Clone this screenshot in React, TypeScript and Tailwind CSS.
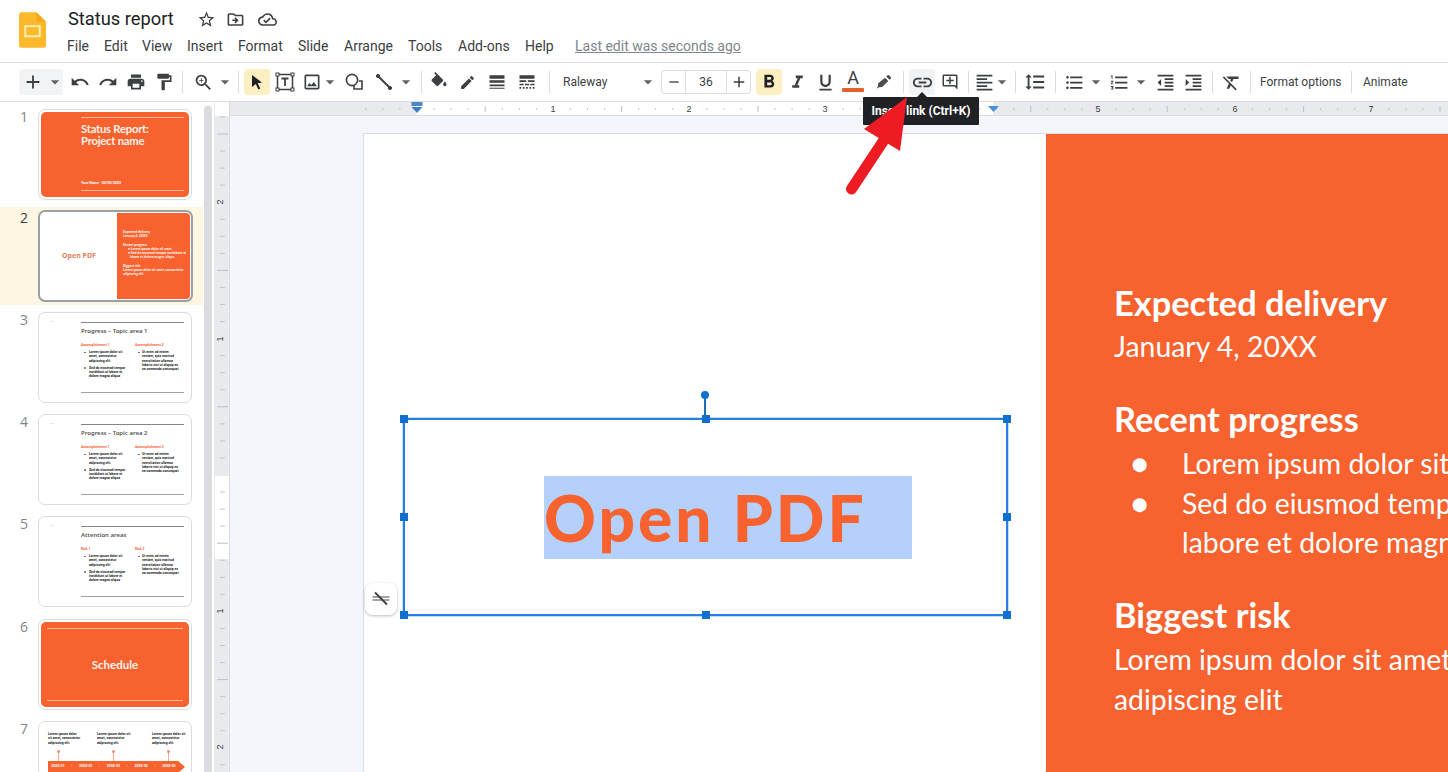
import React from "react";
import {
  MdAdd, MdArrowDropDown, MdUndo, MdRedo, MdPrint, MdFormatPaint, MdOutlineZoomIn, MdOutlineImage,
  MdEdit, MdLineWeight, MdLineStyle, MdRemove, MdFormatItalic, MdFormatUnderlined,
  MdFormatBold, MdLink, MdOutlineAddComment, MdFormatAlignLeft, MdFormatLineSpacing,
  MdFormatListBulleted, MdFormatListNumbered, MdFormatIndentDecrease, MdFormatIndentIncrease, MdFormatClear,
  MdStarBorder, MdOutlineDriveFileMove, MdOutlineCloudDone,
} from "react-icons/md";

const ic = "#3c4043";

function Sep({ className }: { className: string }) {
  return (
    <div className={`flex justify-center shrink-0 ${className}`}>
      <div className="w-px h-[22px] bg-[#dadce0]" />
    </div>
  );
}

function Btn({ className, children }: { className: string; children: React.ReactNode }) {
  return <div className={`flex items-center justify-center h-[26px] shrink-0 rounded ${className}`}>{children}</div>;
}

function Caret({ className = "w-[14px]" }: { className?: string }) {
  return (
    <Btn className={className}>
      <MdArrowDropDown size={20} color="#5f6368" className="shrink-0" />
    </Btn>
  );
}

function SlidesLogo() {
  return (
    <svg width="27" height="36" viewBox="0 0 28 37" className="shrink-0">
      <path d="M3 0h15l10 10v24a3 3 0 0 1-3 3H3a3 3 0 0 1-3-3V3a3 3 0 0 1 3-3z" fill="#fbb92b" />
      <path d="M18 0l10 10h-7a3 3 0 0 1-3-3z" fill="#f6a81c" />
      <rect x="6.5" y="14.5" width="15" height="10.5" fill="none" stroke="#fdeeb8" strokeWidth="2" />
    </svg>
  );
}

function Header() {
  const menus = [
    ["File", "w-[37px]"], ["Edit", "w-[38px]"], ["View", "w-[45px]"], ["Insert", "w-[51px]"], ["Format", "w-[60px]"],
    ["Slide", "w-[46px]"], ["Arrange", "w-[64px]"], ["Tools", "w-[50px]"], ["Add-ons", "w-[67px]"], ["Help", "w-[50px]"],
  ];
  return (
    <div className="h-[63px] shrink-0 flex border-b border-[#dadce0] pl-[19px]">
      <div className="pt-[12px] w-[48px] shrink-0"><SlidesLogo /></div>
      <div className="flex flex-col">
        <div className="flex items-center h-[22px] mt-[8px]">
          <span className="text-[18.3px] leading-[22px] text-[#202124] w-[130px] pl-px">Status report</span>
          <MdStarBorder size={19} color={ic} />
          <MdOutlineDriveFileMove size={19} color={ic} className="ml-[10px]" />
          <MdOutlineCloudDone size={19} color={ic} className="ml-[13px]" />
        </div>
        <div className="flex items-center h-[18px] mt-[7px] text-[14px] text-[#3c4043]">
          {menus.map(([m, w]) => (
            <span key={m} className={w}>{m}</span>
          ))}
          <span className="text-[#80868b] underline">Last edit was seconds ago</span>
        </div>
      </div>
    </div>
  );
}

function CursorIcon() {
  return (
    <svg width="18" height="18" viewBox="0 0 18 18">
      <path d="M4 2l10 7.6-4.3.6 2.6 5.3-2 .9-2.5-5.3L4 14z" fill="#202124" />
    </svg>
  );
}

function TextBoxIcon() {
  return (
    <svg width="20" height="20" viewBox="0 0 20 20" fill="none" stroke={ic} strokeWidth="1.5">
      <rect x="2.5" y="2.5" width="15" height="15" />
      <rect x="1" y="1" width="3" height="3" fill="#fff" strokeWidth="1" />
      <rect x="16" y="1" width="3" height="3" fill="#fff" strokeWidth="1" />
      <rect x="1" y="16" width="3" height="3" fill="#fff" strokeWidth="1" />
      <rect x="16" y="16" width="3" height="3" fill="#fff" strokeWidth="1" />
      <path d="M6.5 6.5h7M10 6.5v7.5" strokeWidth="1.8" />
    </svg>
  );
}

function ShapeIcon() {
  return (
    <svg width="20" height="20" viewBox="0 0 20 20" fill="none" stroke={ic} strokeWidth="1.6">
      <circle cx="8" cy="8" r="5.6" />
      <path d="M10 13.8V17h8V9h-3.2" />
    </svg>
  );
}

function LineIcon() {
  return (
    <svg width="18" height="18" viewBox="0 0 18 18" fill="none" stroke={ic}>
      <path d="M3 3l12 12" strokeWidth="2" />
      <circle cx="3" cy="3" r="1.6" fill={ic} />
      <circle cx="15" cy="15" r="1.6" fill={ic} />
    </svg>
  );
}

function FillIcon() {
  return (
    <svg width="20" height="20" viewBox="0 0 24 24">
      <path fill={ic} d="M16.56 8.94L7.62 0 6.21 1.41l2.38 2.38-5.15 5.15c-.59.59-.59 1.54 0 2.12l5.5 5.5c.29.29.68.44 1.06.44s.77-.15 1.06-.44l5.5-5.5c.59-.58.59-1.53 0-2.12zM19 11.5s-2 2.17-2 3.5c0 1.1.9 2 2 2s2-.9 2-2c0-1.33-2-3.5-2-3.5z" />
    </svg>
  );
}

function MarkerIcon() {
  return (
    <svg width="18" height="18" viewBox="0 0 24 24">
      <path fill="#4a4d51" d="M13.5 6.2l4.3 4.3-8.3 8.3-4.3.2-2.2 1.5-.5-.5 1.5-2.2.2-4.3z" />
      <path fill="#4a4d51" d="M15 4.7l1.8-1.8c.5-.5 1.3-.5 1.8 0l2.5 2.5c.5.5.5 1.3 0 1.8L19.3 9z" />
    </svg>
  );
}

function Toolbar() {
  const s = 20;
  return (
    <div className="h-[39px] shrink-0 flex items-center pl-[19px] border-b border-[#dadce0]">
      <div className="flex items-center h-[26px] w-[44px] shrink-0 bg-[#f1f3f4] rounded">
        <Btn className="w-[28px]"><MdAdd size={22} color={ic} /></Btn>
        <Caret className="w-[16px]" />
      </div>
      <Btn className="w-[28px] ml-[3px]"><MdUndo size={s} color={ic} /></Btn>
      <Btn className="w-[28px]"><MdRedo size={s} color={ic} /></Btn>
      <Btn className="w-[28px]"><MdPrint size={s} color={ic} /></Btn>
      <Btn className="w-[28px]"><MdFormatPaint size={s} color={ic} /></Btn>
      <Sep className="w-[9px]" />
      <Btn className="w-[30px] ml-px"><MdOutlineZoomIn size={21} color={ic} /></Btn>
      <Caret className="w-[14px]" />
      <Sep className="w-[12px]" />
      <Btn className="w-[26px] bg-[#feefc3]"><CursorIcon /></Btn>
      <Btn className="w-[30px]"><TextBoxIcon /></Btn>
      <Btn className="w-[24px]"><MdOutlineImage size={s} color={ic} /></Btn>
      <Caret className="w-[12px]" />
      <Btn className="w-[28px] ml-[4px]"><ShapeIcon /></Btn>
      <Btn className="w-[28px] ml-[2px]"><LineIcon /></Btn>
      <Caret className="w-[16px]" />
      <Sep className="w-[14px]" />
      <Btn className="w-[21px]"><FillIcon /></Btn>
      <Btn className="w-[30px] ml-[3px]"><MdEdit size={17} color={ic} /></Btn>
      <Btn className="w-[30px]"><MdLineWeight size={s} color={ic} /></Btn>
      <Btn className="w-[30px]"><MdLineStyle size={s} color={ic} /></Btn>
      <Sep className="w-[14px]" />
      <div className="w-[106px] shrink-0 flex items-center justify-between text-[12px] text-[#3c4043] pl-[7px]">
        <span>Raleway</span>
        <span className="pr-[4px]"><MdArrowDropDown size={20} color="#5f6368" className="block" /></span>
      </div>
      <div className="flex items-center w-[90px] h-[24px] border border-[#dadce0] rounded shrink-0 ml-[-1px]">
        <div className="w-[24px] h-full flex items-center justify-center border-r border-[#dadce0]"><MdRemove size={16} color={ic} /></div>
        <div className="flex-1 text-center text-[12px] text-[#3c4043]">36</div>
        <div className="w-[24px] h-full flex items-center justify-center border-l border-[#dadce0]"><MdAdd size={18} color={ic} /></div>
      </div>
      <Btn className="w-[26px] ml-[5px] bg-[#feefc3]"><MdFormatBold size={22} color="#202124" /></Btn>
      <Btn className="w-[30px]"><MdFormatItalic size={21} color={ic} /></Btn>
      <Btn className="w-[26px]"><MdFormatUnderlined size={21} color={ic} /></Btn>
      <Btn className="w-[30px] flex-col relative">
        <span className="text-[18px] leading-[20px] text-[#3c4043] -mt-[4px]">A</span>
        <span className="block w-[22px] h-[4px] bg-[#e0622f] rounded-[1px]" />
      </Btn>
      <Btn className="w-[32px]"><MarkerIcon /></Btn>
      <Sep className="w-[6px]" />
      <Btn className="w-[26px] bg-[#f1f3f4] ml-[3px]"><MdLink size={23} color={ic} /></Btn>
      <Btn className="w-[30px]"><MdOutlineAddComment size={18} color={ic} /></Btn>
      <Sep className="w-[6px]" />
      <Btn className="w-[26px]"><MdFormatAlignLeft size={21} color={ic} /></Btn>
      <Caret className="w-[10px]" />
      <Sep className="w-[16px]" />
      <Btn className="w-[24px]"><MdFormatLineSpacing size={22} color={ic} /></Btn>
      <Sep className="w-[16px]" />
      <Btn className="w-[22px]"><MdFormatListBulleted size={21} color={ic} /></Btn>
      <Caret className="w-[22px]" />
      <Btn className="w-[24px]"><MdFormatListNumbered size={21} color={ic} /></Btn>
      <Caret className="w-[20px]" />
      <Btn className="w-[28px]"><MdFormatIndentDecrease size={21} color={ic} /></Btn>
      <Btn className="w-[28px]"><MdFormatIndentIncrease size={21} color={ic} /></Btn>
      <Sep className="w-[10px]" />
      <Btn className="w-[28px]"><MdFormatClear size={21} color={ic} /></Btn>
      <Sep className="w-[10px]" />
      <span className="text-[12px] text-[#3c4043] whitespace-nowrap w-[96px] pl-[5px]">Format options</span>
      <Sep className="w-px" />
      <span className="text-[12px] text-[#3c4043] whitespace-nowrap pl-[11px]">Animate</span>
    </div>
  );
}

function OrangeThumb() {
  return (
    <div className="w-full h-full bg-[#f7622f] rounded-[5px] flex flex-col pt-[5px] pb-[6px] pl-[40px] pr-[5px]">
      <div className="h-px bg-[#fdb79e]" />
      <div className="text-[11.2px] leading-[12px] font-bold text-[#fff3ec] mt-[5px] tracking-[-0.2px] font-['Lato']">Status Report:<br />Project name</div>
      <div className="flex-1" />
      <div className="text-[3.6px] font-bold text-white">Your Name · 00/00/20XX</div>
      <div className="h-px bg-[#fdb79e] mt-[4px]" />
    </div>
  );
}

const tiny = "text-[3.4px] leading-[4.3px] text-[#202124] font-bold";

function Bullet({ children, className }: { children: React.ReactNode; className: string }) {
  return (
    <div className={`${tiny} relative ${className}`}>
      <span className="absolute left-[3px] top-[1.5px] w-[1.5px] h-[1.5px] rounded-full bg-[#5f6368]" />
      {children}
    </div>
  );
}

function ContentThumb({ title, h1, h2 }: { title: string; h1: string; h2: string }) {
  return (
    <div className="w-full h-full bg-white flex rounded-[5px] px-[2px]">
      <div className="w-[38px] shrink-0 pl-[8px] pt-[4px] text-[4px] text-gray-500 leading-[6px]">–</div>
      <div className="flex-1 pr-[3px] pt-[7px] flex flex-col">
        <div className="h-[1px] bg-[#80868b]" />
        <div className="text-[6px] leading-[8px] font-semibold text-[#555555] mt-[4px] whitespace-nowrap font-['Noto_Sans']">{title}</div>
        <div className="flex mt-[8px] flex-1">
          <div className="w-[54px] shrink-0">
            <div className="text-[3.4px] leading-[5px] font-bold text-[#f7622f]">{h1}</div>
            <Bullet className="mt-[2px] pl-[8px] pr-[8px]">Lorem ipsum dolor sit amet, consectetur adipiscing elit</Bullet>
            <Bullet className="mt-[3px] pl-[8px] pr-[8px]">Sed do eiusmod tempor incididunt ut labore et dolore magna aliqua</Bullet>
          </div>
          <div className="flex-1">
            <div className="text-[3.4px] leading-[5px] font-bold text-[#f7622f]">{h2}</div>
            <Bullet className="mt-[2px] pl-[7px] pr-[4px]">Ut enim ad minim veniam, quis nostrud exercitation ullamco laboris nisi ut aliquip ex ea commodo consequat</Bullet>
          </div>
        </div>
        <div className="h-[1px] bg-[#a0a4a8] mb-[7px]" />
      </div>
    </div>
  );
}

function Card({ children, selected }: { children: React.ReactNode; selected?: boolean }) {
  return (
    <div
      className={
        selected
          ? "w-[155px] h-[92px] rounded-[7px] border-[2px] border-[#9aa0a6] bg-white shrink-0 overflow-hidden"
          : "w-[154px] h-[91px] rounded-[7px] border-[1px] border-[#dadce0] bg-white p-[2px] shrink-0 overflow-hidden"
      }
    >
      {children}
    </div>
  );
}

function Row({ n, children, selected, className }: { n: number; children: React.ReactNode; selected?: boolean; className: string }) {
  return (
    <div className={`flex w-[203px] pl-[38px] relative shrink-0 ${className}`}>
      <span className={`absolute left-[20px] top-0 text-[14px] font-['Open_Sans'] leading-[16px] ${selected ? "text-[#3c4043]" : "text-[#80868b]"}`}>{n}</span>
      {children}
    </div>
  );
}

function SlidePanel() {
  return (
    <div className="w-[215px] shrink-0 flex bg-white overflow-hidden border-r border-[#e8eaed]">
      <div className="w-[203px] shrink-0 flex flex-col pt-[7px]">
        <Row n={1} className="h-[98px]"><Card><OrangeThumb /></Card></Row>
        <div className="bg-[#fdf6e3] h-[98px] pt-[3px] shrink-0">
          <Row n={2} selected className="h-[92px]">
            <Card selected>
              <div className="w-full h-full flex">
                <div className="w-[77px] flex items-center justify-center text-[7px] font-bold text-[#e2805c] font-['Noto_Sans'] pl-[1px]">Open PDF</div>
                <div className="flex-1 bg-[#f7622f] rounded-r-[4px] my-[1px] mr-[1px] pl-[6px] pt-[17px] text-white font-bold text-[3.4px] leading-[4.3px] font-['Lato'] overflow-hidden whitespace-nowrap">
                  <div>Expected delivery<br />January 4, 20XX</div>
                  <div className="mt-[4px]">Recent progress</div>
                  <div className="pl-[5px]">• Lorem ipsum dolor sit amet<br />• Sed do eiusmod tempor incididunt ut<br />&nbsp;&nbsp;labore et dolore magna aliqua</div>
                  <div className="mt-[4px]">Biggest risk</div>
                  <div>Lorem ipsum dolor sit amet, consectetur<br />adipiscing elit</div>
                </div>
              </div>
            </Card>
          </Row>
        </div>
        <div className="h-[7px] shrink-0" />
        <Row n={3} className="h-[102px]"><Card><ContentThumb title="Progress – Topic area 1" h1="Accomplishment 1" h2="Accomplishment 2" /></Card></Row>
        <Row n={4} className="h-[102px]"><Card><ContentThumb title="Progress – Topic area 2" h1="Accomplishment 1" h2="Accomplishment 2" /></Card></Row>
        <Row n={5} className="h-[103px]"><Card><ContentThumb title="Attention areas" h1="Risk 1" h2="Risk 2" /></Card></Row>
        <Row n={6} className="h-[102px]">
          <Card>
            <div className="w-full h-full bg-[#f7622f] rounded-[5px] flex flex-col px-[6px] py-[6px]">
              <div className="h-px bg-[#fdb79e]" />
              <div className="flex-1 flex items-center justify-center text-[11.5px] font-bold text-[#fff3ec] font-['Lato']">Schedule</div>
              <div className="h-px bg-[#fdb79e]" />
            </div>
          </Card>
        </Row>
        <Row n={7} className="h-[60px]">
          <div className="w-[154px] h-[90px] rounded-[7px] border border-[#dadce0] bg-white shrink-0 overflow-hidden pl-[9px] pt-[10px]">
            <div className="flex">
              <div className={`${tiny} w-[49px] pr-[16px]`}>Lorem ipsum dolor sit amet, consectetur adipiscing elit</div>
              <div className={`${tiny} w-[55px] pr-[20px]`}>Lorem ipsum dolor sit amet, consectetur adipiscing elit</div>
              <div className={`${tiny} w-[36px]`}>Lorem ipsum dolor sit amet, consectetur adipiscing elit</div>
            </div>
            <div className="flex h-[16px] pl-[10px]">
              <div className="w-[55px] h-full flex flex-col"><span className="w-[3px] h-[3px] rounded-full bg-[#f28b82] -ml-px mt-[5px]" /><span className="w-px flex-1 bg-[#fca88d]" /></div>
              <div className="w-[55px] h-full flex flex-col"><span className="w-[3px] h-[3px] rounded-full bg-[#f28b82] -ml-px mt-[5px]" /><span className="w-px flex-1 bg-[#fca88d]" /></div>
              <div className="w-[10px] h-full flex flex-col"><span className="w-[3px] h-[3px] rounded-full bg-[#f28b82] -ml-px mt-[5px]" /><span className="w-px flex-1 bg-[#fca88d]" /></div>
            </div>
            <div className="h-[12px] w-[137px] bg-[#f7622f] flex items-center justify-around pr-[6px] text-[3.4px] font-bold text-white [clip-path:polygon(0_0,95%_0,100%_50%,95%_100%,0_100%)]">
              <span>20XX-01</span><span>›</span><span>20XX-02</span><span>›</span><span>20XX-03</span><span>›</span><span>20XX-04</span><span>›</span><span>20XX-05</span>
            </div>
          </div>
        </Row>
      </div>
      <div className="flex-1 relative pt-[4px] pl-px">
        <div className="w-[8px] h-[680px] bg-[#dadce0] rounded-t-[3px]" />
      </div>
    </div>
  );
}

function HRuler() {
  const labels: [number, string][] = [[553, "1"], [689, "2"], [825, "3"], [1098, "5"], [1235, "6"], [1371, "7"]];
  const ticks: number[] = [];
  for (let i = -3; i < 68; i++) ticks.push(i);
  return (
    <div className="h-[14px] shrink-0 bg-[#e8eaed] border-b border-[#dadce0] relative flex">
      <div className="w-[186px] shrink-0" />
      <div className="w-[577px] shrink-0 bg-white" />
      <svg className="absolute left-0 top-0" width="1232" height="14">
        {ticks.map((i) => {
          const x = 187 + i * 17.05;
          if (i % 8 === 0) return null;
          if (i % 4 === 0) return <line key={i} x1={x} x2={x} y1="4" y2="10" stroke="#bdc1c6" />;
          return <line key={i} x1={x} x2={x} y1="6" y2="8" stroke="#c4c7ca" />;
        })}
      </svg>
      {labels.map(([x, t]) => (
        <span key={t} className="absolute top-0 text-[9px] leading-[14px] text-[#3c4043] font-['Liberation_Sans'] -translate-x-1/2" style={{ left: x - 230 }}>
          {t}
        </span>
      ))}
      <svg className="absolute left-[180px] top-0" width="14" height="13" viewBox="0 0 14 13">
        <rect x="1.5" y="0" width="11" height="4" fill="#4a86c8" />
        <path d="M1.5 5h11L7 11z" fill="#3b7fc4" />
      </svg>
      <svg className="absolute left-[757px] top-[3px]" width="13" height="9" viewBox="0 0 13 9">
        <path d="M1 1h11L6.5 7z" fill="#4a90d9" />
      </svg>
    </div>
  );
}

function VRuler() {
  const ticks: number[] = [];
  for (let i = -23; i < 18; i++) ticks.push(i);
  return (
    <div className="w-[15px] shrink-0 bg-[#e8eaed] border-r border-[#dadce0] relative flex flex-col">
      <div className="h-[14px] shrink-0 bg-white" />
      <div className="h-[360px] shrink-0" />
      <div className="h-[83px] shrink-0 bg-white" />
      <svg className="absolute left-0 top-0" width="15" height="670">
        {ticks.map((i) => {
          const y = 373 + i * 17.05;
          if (i % 8 === 0) return null;
          if (i % 4 === 0) return <line key={i} x1="2" x2="13" y1={y} y2={y} stroke="#bdc1c6" />;
          return <line key={i} x1="5" x2="10" y1={y} y2={y} stroke="#c4c7ca" />;
        })}
      </svg>
      {[[100, "2"], [237, "1"], [509, "1"], [645, "2"]].map(([y, t], i) => (
        <span key={i} className="absolute left-[3px] text-[9px] leading-[9px] text-[#3c4043] font-['Liberation_Sans'] -rotate-90 -translate-y-1/2" style={{ top: y as number }}>
          {t}
        </span>
      ))}
    </div>
  );
}

function Handle({ className }: { className: string }) {
  return <div className={`absolute w-[8px] h-[8px] bg-[#1170cf] ${className}`} />;
}

function SlideCanvas() {
  return (
    <div className="flex-1 bg-[#f3f7fb] pt-[17px] pl-[133px] overflow-hidden relative">
      <div className="w-[1100px] h-[700px] bg-white border-l border-t border-[#dadce0] flex">
        <div className="w-[682px] shrink-0 relative">
          <div className="absolute left-[39px] top-[284px] w-[605px] h-[198px] border-2 border-[#2a7de1] shadow-[0_0_0_1px_#bfe0fb] flex items-center justify-start pl-[139px]">
            <div className="h-[83px] w-[368px] bg-[#b4d0fb] flex items-center overflow-visible">
              <span className="text-[64px] leading-[83px] font-black text-[#f7622f] font-['Lato'] whitespace-nowrap tracking-[3px]">Open PDF</span>
            </div>
            <Handle className="left-[-5px] top-[-5px]" />
            <Handle className="left-[297px] top-[-5px]" />
            <Handle className="right-[-5px] top-[-5px]" />
            <Handle className="left-[-5px] top-[93px]" />
            <Handle className="right-[-5px] top-[93px]" />
            <Handle className="left-[-5px] bottom-[-5px]" />
            <Handle className="left-[297px] bottom-[-5px]" />
            <Handle className="right-[-5px] bottom-[-5px]" />
            <div className="absolute left-[299px] top-[-24px] w-[2px] h-[24px] bg-[#1a6fb8]" />
            <div className="absolute left-[296px] top-[-29px] w-[8px] h-[8px] rounded-full bg-[#1170cf]" />
          </div>
          <div className="absolute left-[1px] top-[449px] w-[32px] h-[32px] rounded-lg bg-white shadow-[0_1px_3px_rgba(60,64,67,0.35)] flex items-center justify-center">
            <svg width="20" height="20" viewBox="0 0 20 20" fill="none" stroke="#3c4043">
              <path d="M1.5 8h17M1.5 11h17" stroke="#80868b" strokeWidth="1.4" />
              <path d="M4 3.5l12 12" strokeWidth="1.8" />
            </svg>
          </div>
        </div>
        <div className="flex-1 bg-[#f7622f] text-white font-['Lato'] pl-[68px] pt-[146px] whitespace-nowrap">
          <div className="text-[34.4px] leading-[46px] font-bold">Expected delivery</div>
          <div className="text-[28.4px] leading-[40px]">January 4, 20XX</div>
          <div className="text-[34.4px] leading-[46px] font-bold mt-[30px]">Recent progress</div>
          <div className="text-[28.4px] leading-[39.5px] flex mt-[2px]">
            <span className="w-[68px] pl-[17px]">●</span>
            <span>Lorem ipsum dolor sit amet</span>
          </div>
          <div className="text-[28.4px] leading-[39.5px] flex">
            <span className="w-[68px] pl-[17px]">●</span>
            <span>Sed do eiusmod tempor incididunt ut<br />labore et dolore magna aliqua</span>
          </div>
          <div className="text-[34.4px] leading-[46px] font-bold mt-[29px]">Biggest risk</div>
          <div className="text-[28.4px] leading-[40px] mt-[1px]">Lorem ipsum dolor sit amet, consectetur<br />adipiscing elit</div>
        </div>
      </div>
    </div>
  );
}

function Overlays() {
  return (
    <>
      <div className="absolute left-[863px] top-[97px] w-[116px] h-[28px] bg-[#202124] rounded-[1px] text-white text-[12px] font-bold flex items-center justify-center whitespace-nowrap font-['Roboto']">
        Insert link (Ctrl+K)
      </div>
      <div className="absolute left-[917px] top-[92px] w-0 h-0 border-x-[5px] border-x-transparent border-b-[5px] border-b-[#202124]" />
      <svg className="absolute left-[840px] top-[90px]" width="80" height="110" viewBox="0 0 80 110">
        <path d="M67 7L24 39l36 22z" fill="#ed1c24" />
        <path d="M44 50L11.5 99" stroke="#ed1c24" strokeWidth="11" strokeLinecap="round" fill="none" />
      </svg>
    </>
  );
}

export default function App() {
  return (
    <div className="relative w-[1448px] h-[772px] overflow-hidden bg-white font-['Roboto',sans-serif] flex flex-col">
      <Header />
      <Toolbar />
      <div className="flex flex-1 min-h-0">
        <SlidePanel />
        <div className="flex flex-col flex-1 min-w-0">
          <div className="flex flex-1 min-h-0">
            <VRuler />
            <div className="flex-1 flex flex-col min-w-0">
              <HRuler />
              <SlideCanvas />
            </div>
          </div>
        </div>
      </div>
      <Overlays />
    </div>
  );
}
